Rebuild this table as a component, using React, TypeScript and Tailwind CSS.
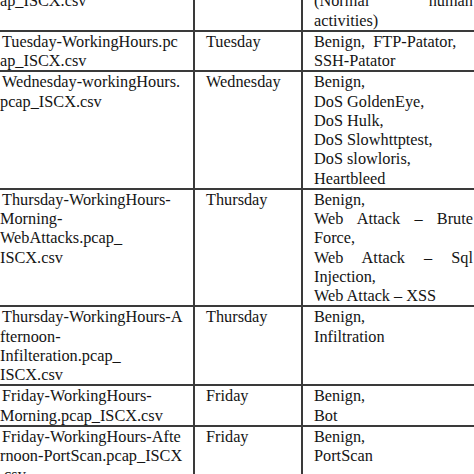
const rows = [
  {
    file: ["Monday-WorkingHours.pc", "ap_ISCX.csv"],
    day: "Monday",
    labels: [{ t: "Benign" }, { t: "(Normal human", j: true }, { t: "activities)" }],
  },
  {
    file: ["Tuesday-WorkingHours.pc", "ap_ISCX.csv"],
    day: "Tuesday",
    labels: [{ t: "Benign,\u00a0 FTP-Patator," }, { t: "SSH-Patator" }],
  },
  {
    file: ["Wednesday-workingHours.", "pcap_ISCX.csv"],
    day: "Wednesday",
    labels: [
      { t: "Benign," },
      { t: "DoS GoldenEye," },
      { t: "DoS Hulk," },
      { t: "DoS Slowhttptest," },
      { t: "DoS slowloris," },
      { t: "Heartbleed" },
    ],
  },
  {
    file: ["Thursday-WorkingHours-", "Morning-", "WebAttacks.pcap_", "ISCX.csv"],
    day: "Thursday",
    labels: [
      { t: "Benign," },
      { t: "Web Attack \u2013 Brute", j: true },
      { t: "Force," },
      { t: "Web Attack \u2013 Sql", j: true },
      { t: "Injection," },
      { t: "Web Attack \u2013 XSS" },
    ],
  },
  {
    file: ["Thursday-WorkingHours-A", "fternoon-", "Infilteration.pcap_", "ISCX.csv"],
    day: "Thursday",
    labels: [{ t: "Benign," }, { t: "Infiltration" }],
  },
  {
    file: ["Friday-WorkingHours-", "Morning.pcap_ISCX.csv"],
    day: "Friday",
    labels: [{ t: "Benign," }, { t: "Bot" }],
  },
  {
    file: ["Friday-WorkingHours-Afte", "rnoon-PortScan.pcap_ISCX", ".csv"],
    day: "Friday",
    labels: [{ t: "Benign," }, { t: "PortScan" }],
  },
];

export default function App() {
  return (
    <div className="h-[474px] w-[474px] overflow-hidden bg-white">
      <div className="-mt-[28px] -ml-[10px] w-[494px] font-['Liberation_Serif',serif] text-[16.3px] leading-[19.25px] text-[#141414]">
        {rows.map((row, i) => (
          <div
            key={i}
            className="grid grid-cols-[205px_108px_181px] border-b-2 border-[#3a3a3a]"
          >
            <div className="border-r-2 border-[#3a3a3a] pl-[10px] whitespace-nowrap">
              {row.file.map((line, k) => (
                <div key={k} className={k === 0 ? "pl-[2px]" : ""}>
                  {line}
                </div>
              ))}
            </div>
            <div className="border-r-2 border-[#3a3a3a] pl-[11px]">{row.day}</div>
            <div className="px-[11px]">
              {row.labels.map((l, k) => (
                <div
                  key={k}
                  className={
                    l.j
                      ? "text-justify whitespace-nowrap [text-align-last:justify]"
                      : "whitespace-nowrap"
                  }
                >
                  {l.t}
                </div>
              ))}
            </div>
          </div>
        ))}
      </div>
    </div>
  );
}
